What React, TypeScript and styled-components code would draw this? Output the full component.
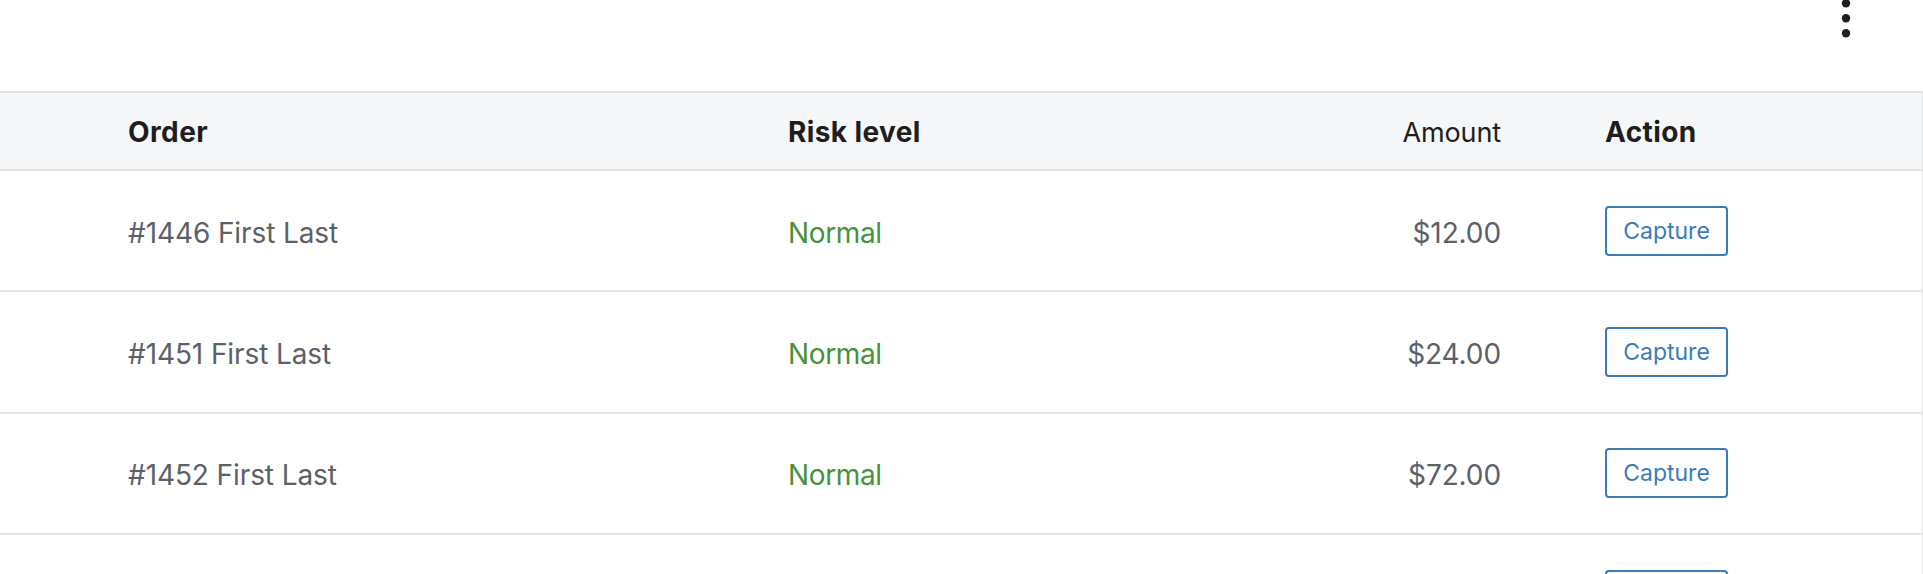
import React from "react";
import styled, { createGlobalStyle } from "styled-components";

const Global = createGlobalStyle`
  * { box-sizing: border-box; }
  html, body { margin: 0; padding: 0; background: #ffffff; }
  body { font-family: Inter, "Noto Sans", "Liberation Sans", sans-serif; -webkit-font-smoothing: antialiased; }
`;

const Page = styled.div`
  width: 1923px;
  height: 574px;
  overflow: hidden;
  background: #ffffff;
`;

const Toolbar = styled.div`
  height: 91px;
  display: flex;
  justify-content: flex-end;
  align-items: flex-start;
  padding-right: 72px;
`;

const MoreButton = styled.button`
  border: 0;
  background: transparent;
  padding: 0;
  width: 10px;
  height: 40px;
  display: flex;
  justify-content: center;
  cursor: pointer;
`;

const Table = styled.div`
  border-top: 2px solid #e2e3e5;
  border-right: 1px solid #e2e3e5;
`;

const Row = styled.div<{ $head?: boolean }>`
  display: grid;
  grid-template-columns: 660px 502px 211px 1fr;
  align-items: center;
  padding-left: 128px;
  height: ${(p) => (p.$head ? "78px" : "121.4px")};
  background: ${(p) => (p.$head ? "#f6f7f8" : "#ffffff")};
  border-bottom: 2px solid #e2e3e5;
`;

const Cell = styled.div<{ $align?: "left" | "right"; $pad?: number }>`
  text-align: ${(p) => p.$align ?? "left"};
  padding-left: ${(p) => p.$pad ?? 0}px;
  white-space: nowrap;
`;

const HeadText = styled.span<{ $bold?: boolean }>`
  display: inline-block;
  padding-top: 2px;
  font-size: ${(p) => (p.$bold ? 28 : 27)}px;
  font-weight: ${(p) => (p.$bold ? 700 : 400)};
  color: #1e1e1e;
  letter-spacing: ${(p) => (p.$bold ? "0.4px" : "-0.1px")};
`;

const BodyText = styled.span<{ $tone?: "green" }>`
  display: inline-block;
  padding-top: 4px;
  font-size: 28px;
  font-weight: 400;
  color: ${(p) => (p.$tone === "green" ? "#47923a" : "#5c6167")};
  letter-spacing: ${(p) => (p.$tone === "green" ? "-0.35px" : "-0.1px")};
`;

const CaptureButton = styled.button`
  width: 123px;
  height: 50px;
  border: 2px solid #3a7bb9;
  border-radius: 4px;
  background: #ffffff;
  color: #3a7bb9;
  font-family: Inter, "Noto Sans", "Liberation Sans", sans-serif;
  font-size: 23px;
  font-weight: 400;
  padding: 0;
  display: flex;
  align-items: center;
  justify-content: center;
  cursor: pointer;
`;

const orders = [
  { id: "#1446 First Last", risk: "Normal", amount: "$12.00" },
  { id: "#1451 First Last", risk: "Normal", amount: "$24.00" },
  { id: "#1452 First Last", risk: "Normal", amount: "$72.00" },
  { id: "#1453 First Last", risk: "Normal", amount: "$36.00" },
];

export default function App() {
  return (
    <Page>
      <Global />
      <Toolbar>
        <MoreButton aria-label="More">
          <svg width="10" height="40" viewBox="0 0 10 40">
            <circle cx="5" cy="3.3" r="4.2" fill="#1e1e1e" />
            <circle cx="5" cy="18.3" r="4.2" fill="#1e1e1e" />
            <circle cx="5" cy="33.3" r="4.2" fill="#1e1e1e" />
          </svg>
        </MoreButton>
      </Toolbar>
      <Table>
        <Row $head>
          <Cell><HeadText $bold>Order</HeadText></Cell>
          <Cell><HeadText $bold>Risk level</HeadText></Cell>
          <Cell $align="right"><HeadText>Amount</HeadText></Cell>
          <Cell $pad={104}><HeadText $bold>Action</HeadText></Cell>
        </Row>
        {orders.map((o) => (
          <Row key={o.id}>
            <Cell><BodyText>{o.id}</BodyText></Cell>
            <Cell><BodyText $tone="green">{o.risk}</BodyText></Cell>
            <Cell $align="right"><BodyText>{o.amount}</BodyText></Cell>
            <Cell $pad={104}><CaptureButton>Capture</CaptureButton></Cell>
          </Row>
        ))}
      </Table>
    </Page>
  );
}
